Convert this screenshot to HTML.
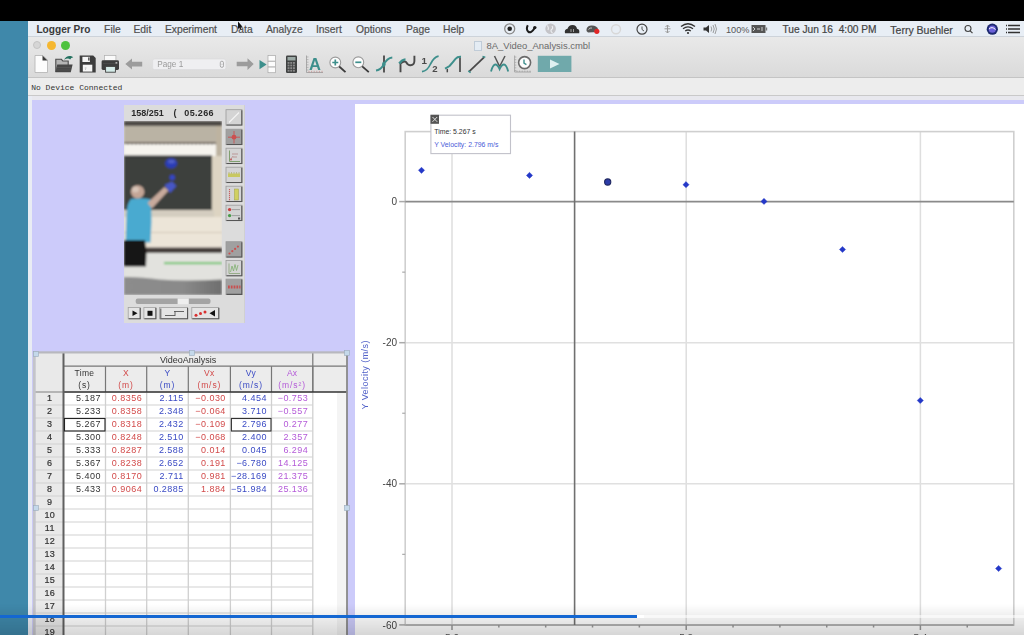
<!DOCTYPE html><html><head><meta charset="utf-8"><style>
*{margin:0;padding:0;box-sizing:border-box}
html,body{width:1024px;height:635px;overflow:hidden;background:#000;font-family:"Liberation Sans",sans-serif}
.a{position:absolute}
.t{position:absolute;white-space:nowrap;line-height:1}
svg{position:absolute;overflow:visible}
</style></head><body><div id="root" style="position:absolute;left:0;top:0;width:1024px;height:635px;overflow:hidden;filter:blur(0.35px)">
<div class="a" style="left:0;top:21px;width:28px;height:614px;background:#3f88aa"></div>
<div class="a" style="left:28px;top:21px;width:996px;height:614px;background:#e3e6ec"></div>
<div class="a" style="left:28px;top:37px;width:4.5px;height:598px;background:#e9ecf4"></div>
<div class="a" style="left:28px;top:21px;width:996px;height:16px;background:#e8eef5;border-bottom:1px solid #cdd3da"></div>
<div class="t" style="left:36.4px;top:24.81px;font-size:10.15px;color:#3a3a3a;font-weight:bold;">Logger Pro</div>
<div class="t" style="left:104.1px;top:24.68px;font-size:10.3px;color:#505050;-webkit-text-stroke:0.2px #505050;">File</div>
<div class="t" style="left:133.5px;top:24.68px;font-size:10.3px;color:#505050;-webkit-text-stroke:0.2px #505050;">Edit</div>
<div class="t" style="left:164.9px;top:24.68px;font-size:10.3px;color:#505050;-webkit-text-stroke:0.2px #505050;">Experiment</div>
<div class="t" style="left:230.9px;top:24.68px;font-size:10.3px;color:#505050;-webkit-text-stroke:0.2px #505050;">Data</div>
<div class="t" style="left:266px;top:24.68px;font-size:10.3px;color:#505050;-webkit-text-stroke:0.2px #505050;">Analyze</div>
<div class="t" style="left:316px;top:24.68px;font-size:10.3px;color:#505050;-webkit-text-stroke:0.2px #505050;">Insert</div>
<div class="t" style="left:356px;top:24.68px;font-size:10.3px;color:#505050;-webkit-text-stroke:0.2px #505050;">Options</div>
<div class="t" style="left:406px;top:24.68px;font-size:10.3px;color:#505050;-webkit-text-stroke:0.2px #505050;">Page</div>
<div class="t" style="left:443px;top:24.68px;font-size:10.3px;color:#505050;-webkit-text-stroke:0.2px #505050;">Help</div>
<div class="t" style="left:726px;top:25.51px;font-size:9.2px;color:#555;">100%</div>
<div class="t" style="left:782.4px;top:25.07px;font-size:10.2px;color:#444;-webkit-text-stroke:0.2px #444;">Tue Jun 16 &nbsp;4:00 PM</div>
<div class="t" style="left:890.3px;top:24.81px;font-size:10.5px;color:#444;-webkit-text-stroke:0.2px #444;">Terry Buehler</div>
<svg width="1024" height="635" style="left:0;top:0"><path d="M238 21.5 L238 29 L239.6 27.4 L240.8 30 L241.6 29.6 L240.5 27 L242.5 26.8Z" fill="#111"/></svg>
<div class="a" style="left:28px;top:37px;width:996px;height:41px;background:linear-gradient(#e9e9e9,#dadada);border-bottom:1px solid #c4c4c4"></div>
<div class="a" style="left:32.5px;top:40.5px;width:8.5px;height:8.5px;border-radius:50%;background:#d6d6d6;border:1px solid #c4c4c4"></div>
<div class="a" style="left:46.5px;top:40.5px;width:9px;height:9px;border-radius:50%;background:#f5b731"></div>
<div class="a" style="left:61px;top:40.5px;width:9px;height:9px;border-radius:50%;background:#4ec23e"></div>
<div class="t" style="left:486.5px;top:41.00px;font-size:9.45px;color:#6a6a6a;">8A_Video_Analysis.cmbl</div>
<div class="a" style="left:473.5px;top:40.5px;width:8px;height:10.5px;background:#e4ecf4;border:1px solid #c0ccd8"></div>
<div class="a" style="left:28px;top:78px;width:996px;height:18px;background:#ededed;border-bottom:1px solid #c9c9c9"></div>
<div class="t" style="left:31.2px;top:84.03px;font-size:8px;color:#333;font-family:'Liberation Mono',monospace;">No Device Connected</div>
<div class="a" style="left:32px;top:96px;width:992px;height:5px;background:#e8e8ee"></div>
<div class="a" style="left:32px;top:100px;width:992px;height:535px;background:#cccbfa"></div>
<div class="a" style="left:355px;top:104px;width:669px;height:531px;background:#fff"></div><svg width="1024" height="635" style="left:0;top:0" viewBox="0 0 1024 635"><line x1="452.0" y1="131.6" x2="452.0" y2="625.0" stroke="#dedede" stroke-width="1.5"/><line x1="686.2" y1="131.6" x2="686.2" y2="625.0" stroke="#dedede" stroke-width="1.5"/><line x1="920.4" y1="131.6" x2="920.4" y2="625.0" stroke="#dedede" stroke-width="1.5"/><line x1="405.2" y1="342.7" x2="1013.8" y2="342.7" stroke="#e0e0e0" stroke-width="1.5"/><line x1="405.2" y1="483.79999999999995" x2="1013.8" y2="483.79999999999995" stroke="#e0e0e0" stroke-width="1.5"/><rect x="405.2" y="131.6" width="608.5999999999999" height="493.4" fill="none" stroke="#cfcfcf" stroke-width="1.6"/><line x1="405.2" y1="201.6" x2="1013.8" y2="201.6" stroke="#8a8a8a" stroke-width="1.7"/><line x1="405.2" y1="625.0" x2="1013.8" y2="625.0" stroke="#b4b4b4" stroke-width="1.8"/><line x1="574.6" y1="131.6" x2="574.6" y2="625.0" stroke="#707070" stroke-width="1.6"/><line x1="399.2" y1="201.6" x2="405.2" y2="201.6" stroke="#aaa" stroke-width="1.5"/><line x1="399.2" y1="342.7" x2="405.2" y2="342.7" stroke="#aaa" stroke-width="1.5"/><line x1="399.2" y1="483.79999999999995" x2="405.2" y2="483.79999999999995" stroke="#aaa" stroke-width="1.5"/><line x1="399.2" y1="624.9" x2="405.2" y2="624.9" stroke="#aaa" stroke-width="1.5"/><line x1="402.2" y1="272.15" x2="405.2" y2="272.15" stroke="#aaa" stroke-width="1.2"/><line x1="402.2" y1="413.25" x2="405.2" y2="413.25" stroke="#aaa" stroke-width="1.2"/><line x1="402.2" y1="554.35" x2="405.2" y2="554.35" stroke="#aaa" stroke-width="1.2"/><line x1="452.0" y1="625.0" x2="452.0" y2="630.0" stroke="#999" stroke-width="1.5"/><line x1="498.839999999999" y1="625.0" x2="498.839999999999" y2="627.5" stroke="#999" stroke-width="1.5"/><line x1="545.6800000000001" y1="625.0" x2="545.6800000000001" y2="627.5" stroke="#999" stroke-width="1.5"/><line x1="592.5199999999991" y1="625.0" x2="592.5199999999991" y2="627.5" stroke="#999" stroke-width="1.5"/><line x1="639.3600000000001" y1="625.0" x2="639.3600000000001" y2="627.5" stroke="#999" stroke-width="1.5"/><line x1="686.1999999999991" y1="625.0" x2="686.1999999999991" y2="630.0" stroke="#999" stroke-width="1.5"/><line x1="733.0400000000002" y1="625.0" x2="733.0400000000002" y2="627.5" stroke="#999" stroke-width="1.5"/><line x1="779.8799999999992" y1="625.0" x2="779.8799999999992" y2="627.5" stroke="#999" stroke-width="1.5"/><line x1="826.7200000000003" y1="625.0" x2="826.7200000000003" y2="627.5" stroke="#999" stroke-width="1.5"/><line x1="873.5599999999993" y1="625.0" x2="873.5599999999993" y2="627.5" stroke="#999" stroke-width="1.5"/><line x1="920.4000000000004" y1="625.0" x2="920.4000000000004" y2="630.0" stroke="#999" stroke-width="1.5"/><line x1="967.2399999999994" y1="625.0" x2="967.2399999999994" y2="627.5" stroke="#999" stroke-width="1.5"/><text x="452.0" y="641.5" text-anchor="middle" font-size="10" fill="#555" font-family="Liberation Sans">5.2</text><text x="686.2" y="641.5" text-anchor="middle" font-size="10" fill="#555" font-family="Liberation Sans">5.3</text><text x="920.4" y="641.5" text-anchor="middle" font-size="10" fill="#555" font-family="Liberation Sans">5.4</text><text x="397" y="205.2" text-anchor="end" font-size="10" fill="#444" font-family="Liberation Sans">0</text><text x="397" y="346.3" text-anchor="end" font-size="10" fill="#444" font-family="Liberation Sans">-20</text><text x="397" y="487.4" text-anchor="end" font-size="10" fill="#444" font-family="Liberation Sans">-40</text><text x="397" y="628.5" text-anchor="end" font-size="10" fill="#444" font-family="Liberation Sans">-60</text><text transform="translate(368,374.8) rotate(-90)" text-anchor="middle" font-size="9" letter-spacing="0.45" fill="#5060c8" font-family="Liberation Sans">Y Velocity (m/s)</text><path d="M418.4 170.3 L421.5 167.20000000000002 L424.6 170.3 L421.5 173.4Z" fill="#2438c8" stroke="#2438c8" stroke-width="0.4" stroke-linejoin="round"/><path d="M526.4 175.4 L529.5 172.3 L532.6 175.4 L529.5 178.5Z" fill="#2438c8" stroke="#2438c8" stroke-width="0.4" stroke-linejoin="round"/><path d="M682.9 184.7 L686.0 181.6 L689.1 184.7 L686.0 187.79999999999998Z" fill="#2438c8" stroke="#2438c8" stroke-width="0.4" stroke-linejoin="round"/><path d="M760.9 201.4 L764.0 198.3 L767.1 201.4 L764.0 204.5Z" fill="#2438c8" stroke="#2438c8" stroke-width="0.4" stroke-linejoin="round"/><path d="M839.4 249.5 L842.5 246.4 L845.6 249.5 L842.5 252.6Z" fill="#2438c8" stroke="#2438c8" stroke-width="0.4" stroke-linejoin="round"/><path d="M917.1999999999999 400.5 L920.3 397.4 L923.4 400.5 L920.3 403.6Z" fill="#2438c8" stroke="#2438c8" stroke-width="0.4" stroke-linejoin="round"/><path d="M995.5 568.5 L998.6 565.4 L1001.7 568.5 L998.6 571.6Z" fill="#2438c8" stroke="#2438c8" stroke-width="0.4" stroke-linejoin="round"/><circle cx="607.7" cy="182" r="3.1" fill="#2c3ca8" stroke="#1e2660" stroke-width="1.1"/><rect x="430.9" y="115.2" width="79.6" height="38.4" fill="#fff" stroke="#c2c2ca" stroke-width="1.1"/><rect x="430.5" y="114.8" width="8.5" height="9" fill="#555"/><path d="M432.5 117 L437.2 121.8 M437.2 117 L432.5 121.8" stroke="#e0e0e0" stroke-width="1"/><text x="434.2" y="133.8" font-size="6.9" fill="#333" font-family="Liberation Sans">Time: 5.267 s</text><text x="434.2" y="147.4" font-size="6.9" fill="#4a5ad8" font-family="Liberation Sans">Y Velocity: 2.796 m/s</text></svg>
<div class="a" style="left:124px;top:105px;width:121px;height:218px;background:#dcdcdc;border-right:1px solid #d0d0d0"></div><div class="t" style="left:131.2px;top:108.7px;font-size:9px;font-weight:bold;color:#2a2a2a">158/251</div><div class="t" style="left:173.6px;top:108.7px;font-size:9px;font-weight:bold;color:#2a2a2a">(</div><div class="t" style="left:184.3px;top:108.7px;font-size:9px;font-weight:bold;color:#2a2a2a;letter-spacing:0.35px">05.266</div><svg width="1024" height="635" style="left:0;top:0" viewBox="0 0 1024 635"><defs><filter id="bl" x="-5%" y="-5%" width="110%" height="110%"><feGaussianBlur stdDeviation="0.9"/></filter><linearGradient id="gb" x1="0" y1="0" x2="1" y2="0"><stop offset="0" stop-color="#8c8c8c"/><stop offset="0.6" stop-color="#8a8a8a"/><stop offset="1" stop-color="#6e6e6e"/></linearGradient><clipPath id="vc"><rect x="124" y="121" width="98" height="174"/></clipPath></defs><g clip-path="url(#vc)" filter="url(#bl)"><rect x="124" y="121" width="98" height="174" fill="#e6dfd2"/><rect x="124" y="121" width="98" height="5" fill="#4e4a44"/><rect x="124" y="126" width="98" height="17" fill="#bab3a4"/><rect x="124" y="142" width="92" height="2" fill="#7a7066"/><rect x="124" y="144" width="92" height="12" fill="#f6f4ee"/><path d="M124 144 q2 -1.5 4 0 q2 -1.5 4 0 q2 -1.5 4 0 q2 -1.5 4 0 q2 -1.5 4 0 q2 -1.5 4 0 q2 -1.5 4 0 q2 -1.5 4 0 q2 -1.5 4 0 q2 -1.5 4 0 q2 -1.5 4 0 q2 -1.5 4 0 q2 -1.5 4 0 q2 -1.5 4 0 q2 -1.5 4 0 q2 -1.5 4 0 q2 -1.5 4 0 q2 -1.5 4 0 q2 -1.5 4 0 q2 -1.5 4 0 q2 -1.5 4 0 q2 -1.5 4 0 q2 -1.5 4 0" fill="none" stroke="#6a6258" stroke-width="1.2"/><rect x="216" y="126" width="6" height="30" fill="#bdb3a0"/><rect x="212" y="156" width="10" height="61" fill="#ddd4c2"/><rect x="124" y="156" width="88" height="55" fill="#3c403e"/><rect x="124" y="155.5" width="88" height="1.5" fill="#2a2a2a"/><rect x="124" y="210" width="90" height="7" fill="#d4cdc0"/><rect x="124" y="217" width="98" height="31" fill="#ece5d8"/><rect x="124" y="232" width="98" height="1" fill="#d0c6b2"/><rect x="124" y="247.5" width="98" height="5.8" fill="#453c3a"/><rect x="124" y="253" width="98" height="30" fill="#e2e2de"/><rect x="164" y="262" width="58" height="2.2" fill="#74c672"/><path d="M124 277 Q140 276.5 160 279.5 Q185 281.5 222 279.5 L222 295 L124 295Z" fill="url(#gb)"/><path d="M131 199 Q141 197.5 151 199.5 L151.5 222 L150.5 242.5 L125.5 242.5 L126.5 214 Q127 203 131 199Z" fill="#48aad0"/><path d="M147.5 203 L164.5 187 L168.5 190.5 L152 208.5Z" fill="#c8aa9c"/><ellipse cx="137.6" cy="191.8" rx="6.8" ry="6.6" fill="#c4a596"/><ellipse cx="135.5" cy="189.5" rx="3.5" ry="3" fill="#d8c4b8"/><path d="M124 240 L145 240 L146.5 252 L146 266.5 L124 266.5Z" fill="#161616"/><path d="M164.5 185 L172 181.5 L176.5 186 L170 193Z" fill="#4656c6"/><ellipse cx="171.1" cy="163.3" rx="5.9" ry="5.1" fill="#2c3cb8"/><ellipse cx="171.5" cy="161.5" rx="3.5" ry="1.8" fill="#5262c8"/><circle cx="172.2" cy="177.5" r="2.7" fill="#3444c4"/></g><rect x="135.7" y="298.6" width="74.8" height="5.5" rx="2" fill="#a4a4a4"/><rect x="177.6" y="298.4" width="11.2" height="5.8" fill="#eeeeee"/><rect x="128.2" y="307.5" width="12" height="11.3" fill="#e4e4e4" stroke="#a0a0a0" stroke-width="0.8"/><path d="M128.7 318.8 L140.2 318.8 L140.2 308.0" stroke="#555" stroke-width="1.1" fill="none"/><path d="M132.5 310.5 L137.5 313.2 L132.5 316Z" fill="#111"/><rect x="143.9" y="307.5" width="12" height="11.3" fill="#e4e4e4" stroke="#a0a0a0" stroke-width="0.8"/><path d="M144.4 318.8 L155.9 318.8 L155.9 308.0" stroke="#555" stroke-width="1.1" fill="none"/><rect x="147.5" y="310.8" width="5" height="5" fill="#111"/><rect x="159.6" y="307.5" width="28" height="11.3" fill="#e4e4e4" stroke="#a0a0a0" stroke-width="0.8"/><path d="M160.1 318.8 L187.6 318.8 L187.6 308.0" stroke="#555" stroke-width="1.1" fill="none"/><path d="M160.8 308.5 L160.8 318" stroke="#555" stroke-width="1"/><path d="M165 315.5 L175 315.5 M175 311 L175 316 M174 311.5 L184 311.5" stroke="#555" stroke-width="0.9" fill="none"/><rect x="191.8" y="307.5" width="27" height="11.3" fill="#e4e4e4" stroke="#a0a0a0" stroke-width="0.8"/><path d="M192.3 318.8 L218.8 318.8 L218.8 308.0" stroke="#555" stroke-width="1.1" fill="none"/><circle cx="196" cy="315.3" r="1.5" fill="#d83030"/><circle cx="200.5" cy="313.5" r="1.5" fill="#d83030"/><circle cx="205" cy="312" r="1.5" fill="#d83030"/><path d="M209.5 313.2 L215 310 L215 316.4Z" fill="#111"/><rect x="226" y="109.7" width="16" height="15.5" fill="#d4d4d4" stroke="#9a9a9a" stroke-width="0.8"/><path d="M226.5 125.0 L241.8 125.0 L241.8 110.2" stroke="#555" stroke-width="1.1" fill="none"/><rect x="226" y="129.2" width="16" height="15.5" fill="#a0a0a0" stroke="#9a9a9a" stroke-width="0.8"/><path d="M226.5 144.5 L241.8 144.5 L241.8 129.7" stroke="#555" stroke-width="1.1" fill="none"/><rect x="226" y="148.2" width="16" height="15.5" fill="#d4d4d4" stroke="#9a9a9a" stroke-width="0.8"/><path d="M226.5 163.5 L241.8 163.5 L241.8 148.7" stroke="#555" stroke-width="1.1" fill="none"/><rect x="226" y="167.2" width="16" height="15.5" fill="#d4d4d4" stroke="#9a9a9a" stroke-width="0.8"/><path d="M226.5 182.5 L241.8 182.5 L241.8 167.7" stroke="#555" stroke-width="1.1" fill="none"/><rect x="226" y="186.2" width="16" height="15.5" fill="#d4d4d4" stroke="#9a9a9a" stroke-width="0.8"/><path d="M226.5 201.5 L241.8 201.5 L241.8 186.7" stroke="#555" stroke-width="1.1" fill="none"/><rect x="226" y="205.2" width="16" height="15.5" fill="#d4d4d4" stroke="#9a9a9a" stroke-width="0.8"/><path d="M226.5 220.5 L241.8 220.5 L241.8 205.7" stroke="#555" stroke-width="1.1" fill="none"/><rect x="226" y="241.7" width="16" height="15.5" fill="#a0a0a0" stroke="#9a9a9a" stroke-width="0.8"/><path d="M226.5 257.0 L241.8 257.0 L241.8 242.2" stroke="#555" stroke-width="1.1" fill="none"/><rect x="226" y="260.4" width="16" height="15.5" fill="#d4d4d4" stroke="#9a9a9a" stroke-width="0.8"/><path d="M226.5 275.7 L241.8 275.7 L241.8 260.9" stroke="#555" stroke-width="1.1" fill="none"/><rect x="226" y="279.1" width="16" height="15.5" fill="#a0a0a0" stroke="#9a9a9a" stroke-width="0.8"/><path d="M226.5 294.40000000000003 L241.8 294.40000000000003 L241.8 279.6" stroke="#555" stroke-width="1.1" fill="none"/><path d="M229 122.5 L239 112.5" stroke="#f4f4f4" stroke-width="1.1"/><path d="M234 131 L234 143.5 M228 137.2 L240 137.2" stroke="#c85858" stroke-width="1"/><circle cx="234" cy="137.2" r="2.4" fill="#cc5050"/><path d="M229.5 150.5 L229.5 161.5 L240 161.5" stroke="#80a070" stroke-width="1" fill="none"/><path d="M231 159 L233 156 M233 157 L237 157 M232 154 L238 154" stroke="#b08080" stroke-width="0.7"/><circle cx="231" cy="159.5" r="0.9" fill="#c05050"/><rect x="228" y="173.5" width="12" height="3.5" fill="#c8c860"/><path d="M229 173.5 L229 172.3 M231.5 173.5 L231.5 172.3 M234 173.5 L234 172.3 M236.5 173.5 L236.5 172.3 M239 173.5 L239 172.3" stroke="#a0a040" stroke-width="0.7"/><path d="M229.5 189 L229.5 200.5" stroke="#c86060" stroke-width="1.1" stroke-dasharray="1.2 0.8"/><rect x="234.5" y="189" width="4" height="11" fill="#d0d060" stroke="#a0a040" stroke-width="0.5"/><circle cx="229.6" cy="209.6" r="1.7" fill="#c84040"/><circle cx="229.6" cy="215.6" r="1.7" fill="#4a9a4a"/><path d="M232 209.6 L240 209.6 M232 215.6 L240 215.6" stroke="#888" stroke-width="0.7"/><rect x="238" y="217.5" width="2.2" height="2" fill="#555"/><circle cx="229.5" cy="253.5" r="1.1" fill="#c85050"/><circle cx="232.3" cy="251.2" r="1.1" fill="#c85050"/><circle cx="235.1" cy="248.9" r="1.1" fill="#c85050"/><circle cx="237.9" cy="246.6" r="1.1" fill="#c85050"/><path d="M229 263.5 L229 273.5 L240 273.5" stroke="#90a880" stroke-width="0.9" fill="none"/><path d="M230.5 272 L232 266 L233.5 271 L235 264.5 L236.5 270.5 L238 265" stroke="#80b070" stroke-width="0.8" fill="none"/><path d="M228 287 L240.5 287" stroke="#c85050" stroke-width="3.2" stroke-dasharray="1.8 1"/></svg>
<svg width="1024" height="635" style="left:0;top:0" viewBox="0 0 1024 635"><rect x="35.0" y="352.5" width="312.0" height="282.5" fill="#ececec"/><rect x="63.5" y="392.0" width="273.5" height="243.0" fill="#fff"/><rect x="337" y="392.0" width="10.0" height="243.0" fill="#f4f4f4"/><rect x="35.0" y="352.5" width="28.5" height="282.5" fill="#e9e9e9"/><rect x="63.5" y="352.5" width="283.5" height="39.5" fill="#ececec"/><line x1="35.0" y1="392.0" x2="312.8" y2="392.0" stroke="#d2d2d2" stroke-width="1.1"/><line x1="35.0" y1="405.0" x2="312.8" y2="405.0" stroke="#d2d2d2" stroke-width="1.1"/><line x1="35.0" y1="418.0" x2="312.8" y2="418.0" stroke="#d2d2d2" stroke-width="1.1"/><line x1="35.0" y1="431.0" x2="312.8" y2="431.0" stroke="#d2d2d2" stroke-width="1.1"/><line x1="35.0" y1="444.0" x2="312.8" y2="444.0" stroke="#d2d2d2" stroke-width="1.1"/><line x1="35.0" y1="457.0" x2="312.8" y2="457.0" stroke="#d2d2d2" stroke-width="1.1"/><line x1="35.0" y1="470.0" x2="312.8" y2="470.0" stroke="#d2d2d2" stroke-width="1.1"/><line x1="35.0" y1="483.0" x2="312.8" y2="483.0" stroke="#d2d2d2" stroke-width="1.1"/><line x1="35.0" y1="496.0" x2="312.8" y2="496.0" stroke="#d2d2d2" stroke-width="1.1"/><line x1="35.0" y1="509.0" x2="312.8" y2="509.0" stroke="#d2d2d2" stroke-width="1.1"/><line x1="35.0" y1="522.0" x2="312.8" y2="522.0" stroke="#d2d2d2" stroke-width="1.1"/><line x1="35.0" y1="535.0" x2="312.8" y2="535.0" stroke="#d2d2d2" stroke-width="1.1"/><line x1="35.0" y1="548.0" x2="312.8" y2="548.0" stroke="#d2d2d2" stroke-width="1.1"/><line x1="35.0" y1="561.0" x2="312.8" y2="561.0" stroke="#d2d2d2" stroke-width="1.1"/><line x1="35.0" y1="574.0" x2="312.8" y2="574.0" stroke="#d2d2d2" stroke-width="1.1"/><line x1="35.0" y1="587.0" x2="312.8" y2="587.0" stroke="#d2d2d2" stroke-width="1.1"/><line x1="35.0" y1="600.0" x2="312.8" y2="600.0" stroke="#d2d2d2" stroke-width="1.1"/><line x1="35.0" y1="613.0" x2="312.8" y2="613.0" stroke="#d2d2d2" stroke-width="1.1"/><line x1="35.0" y1="626.0" x2="312.8" y2="626.0" stroke="#d2d2d2" stroke-width="1.1"/><line x1="35.0" y1="639.0" x2="312.8" y2="639.0" stroke="#d2d2d2" stroke-width="1.1"/><line x1="105.5" y1="392.0" x2="105.5" y2="635" stroke="#d0d0d0" stroke-width="1.3"/><line x1="146.7" y1="392.0" x2="146.7" y2="635" stroke="#d0d0d0" stroke-width="1.3"/><line x1="188.3" y1="392.0" x2="188.3" y2="635" stroke="#d0d0d0" stroke-width="1.3"/><line x1="230.4" y1="392.0" x2="230.4" y2="635" stroke="#d0d0d0" stroke-width="1.3"/><line x1="271.5" y1="392.0" x2="271.5" y2="635" stroke="#d0d0d0" stroke-width="1.3"/><line x1="312.8" y1="392.0" x2="312.8" y2="635" stroke="#d0d0d0" stroke-width="1.3"/><line x1="63.5" y1="366.2" x2="347.0" y2="366.2" stroke="#777" stroke-width="1.2"/><line x1="105.5" y1="366.2" x2="105.5" y2="392.0" stroke="#777" stroke-width="1.2"/><line x1="146.7" y1="366.2" x2="146.7" y2="392.0" stroke="#777" stroke-width="1.2"/><line x1="188.3" y1="366.2" x2="188.3" y2="392.0" stroke="#777" stroke-width="1.2"/><line x1="230.4" y1="366.2" x2="230.4" y2="392.0" stroke="#777" stroke-width="1.2"/><line x1="271.5" y1="366.2" x2="271.5" y2="392.0" stroke="#777" stroke-width="1.2"/><line x1="312.8" y1="366.2" x2="312.8" y2="392.0" stroke="#777" stroke-width="1.2"/><line x1="312.8" y1="352.5" x2="312.8" y2="392.0" stroke="#777" stroke-width="1.2"/><line x1="63.5" y1="392.0" x2="347.0" y2="392.0" stroke="#333" stroke-width="1.6"/><line x1="35.0" y1="392.0" x2="63.5" y2="392.0" stroke="#999" stroke-width="1.2"/><line x1="63.5" y1="352.5" x2="63.5" y2="635" stroke="#606060" stroke-width="2"/><rect x="32.9" y="351.3" width="314.1" height="2.2" fill="#b8b8be"/><line x1="347.0" y1="352.5" x2="347.0" y2="635" stroke="#8a8a8a" stroke-width="1.8"/><rect x="32.9" y="352.5" width="2.8" height="282.5" fill="#c4c4ca"/><text x="188.15" y="363.0" text-anchor="middle" font-size="9" fill="#333" font-family="Liberation Sans">VideoAnalysis</text><text x="84.5" y="375.7" text-anchor="middle" font-size="8.5" fill="#333" font-family="Liberation Sans" letter-spacing="0.3">Time</text><text x="84.5" y="388.2" text-anchor="middle" font-size="8.5" fill="#333" font-family="Liberation Sans" letter-spacing="0.9">(s)</text><text x="126.1" y="375.7" text-anchor="middle" font-size="8.5" fill="#d24a4a" font-family="Liberation Sans" letter-spacing="0.3">X</text><text x="126.1" y="388.2" text-anchor="middle" font-size="8.5" fill="#d24a4a" font-family="Liberation Sans" letter-spacing="0.9">(m)</text><text x="167.5" y="375.7" text-anchor="middle" font-size="8.5" fill="#3a4ac4" font-family="Liberation Sans" letter-spacing="0.3">Y</text><text x="167.5" y="388.2" text-anchor="middle" font-size="8.5" fill="#3a4ac4" font-family="Liberation Sans" letter-spacing="0.9">(m)</text><text x="209.35000000000002" y="375.7" text-anchor="middle" font-size="8.5" fill="#d24a4a" font-family="Liberation Sans" letter-spacing="0.3">Vx</text><text x="209.35000000000002" y="388.2" text-anchor="middle" font-size="8.5" fill="#d24a4a" font-family="Liberation Sans" letter-spacing="0.9">(m/s)</text><text x="250.95" y="375.7" text-anchor="middle" font-size="8.5" fill="#3a4ac4" font-family="Liberation Sans" letter-spacing="0.3">Vy</text><text x="250.95" y="388.2" text-anchor="middle" font-size="8.5" fill="#3a4ac4" font-family="Liberation Sans" letter-spacing="0.9">(m/s)</text><text x="292.15" y="375.7" text-anchor="middle" font-size="8.5" fill="#b45ad8" font-family="Liberation Sans" letter-spacing="0.3">Ax</text><text x="292.15" y="388.2" text-anchor="middle" font-size="8.5" fill="#b45ad8" font-family="Liberation Sans" letter-spacing="0.9">(m/s²)</text><text x="49.75" y="401.4" text-anchor="middle" font-size="9" fill="#333" stroke="#333" stroke-width="0.2" font-family="Liberation Sans" letter-spacing="0.3">1</text><text x="49.75" y="414.4" text-anchor="middle" font-size="9" fill="#333" stroke="#333" stroke-width="0.2" font-family="Liberation Sans" letter-spacing="0.3">2</text><text x="49.75" y="427.4" text-anchor="middle" font-size="9" fill="#333" stroke="#333" stroke-width="0.2" font-family="Liberation Sans" letter-spacing="0.3">3</text><text x="49.75" y="440.4" text-anchor="middle" font-size="9" fill="#333" stroke="#333" stroke-width="0.2" font-family="Liberation Sans" letter-spacing="0.3">4</text><text x="49.75" y="453.4" text-anchor="middle" font-size="9" fill="#333" stroke="#333" stroke-width="0.2" font-family="Liberation Sans" letter-spacing="0.3">5</text><text x="49.75" y="466.4" text-anchor="middle" font-size="9" fill="#333" stroke="#333" stroke-width="0.2" font-family="Liberation Sans" letter-spacing="0.3">6</text><text x="49.75" y="479.4" text-anchor="middle" font-size="9" fill="#333" stroke="#333" stroke-width="0.2" font-family="Liberation Sans" letter-spacing="0.3">7</text><text x="49.75" y="492.4" text-anchor="middle" font-size="9" fill="#333" stroke="#333" stroke-width="0.2" font-family="Liberation Sans" letter-spacing="0.3">8</text><text x="49.75" y="505.4" text-anchor="middle" font-size="9" fill="#333" stroke="#333" stroke-width="0.2" font-family="Liberation Sans" letter-spacing="0.3">9</text><text x="49.75" y="518.4" text-anchor="middle" font-size="9" fill="#333" stroke="#333" stroke-width="0.2" font-family="Liberation Sans" letter-spacing="0.3">10</text><text x="49.75" y="531.4" text-anchor="middle" font-size="9" fill="#333" stroke="#333" stroke-width="0.2" font-family="Liberation Sans" letter-spacing="0.3">11</text><text x="49.75" y="544.4" text-anchor="middle" font-size="9" fill="#333" stroke="#333" stroke-width="0.2" font-family="Liberation Sans" letter-spacing="0.3">12</text><text x="49.75" y="557.4" text-anchor="middle" font-size="9" fill="#333" stroke="#333" stroke-width="0.2" font-family="Liberation Sans" letter-spacing="0.3">13</text><text x="49.75" y="570.4" text-anchor="middle" font-size="9" fill="#333" stroke="#333" stroke-width="0.2" font-family="Liberation Sans" letter-spacing="0.3">14</text><text x="49.75" y="583.4" text-anchor="middle" font-size="9" fill="#333" stroke="#333" stroke-width="0.2" font-family="Liberation Sans" letter-spacing="0.3">15</text><text x="49.75" y="596.4" text-anchor="middle" font-size="9" fill="#333" stroke="#333" stroke-width="0.2" font-family="Liberation Sans" letter-spacing="0.3">16</text><text x="49.75" y="609.4" text-anchor="middle" font-size="9" fill="#333" stroke="#333" stroke-width="0.2" font-family="Liberation Sans" letter-spacing="0.3">17</text><text x="49.75" y="622.4" text-anchor="middle" font-size="9" fill="#333" stroke="#333" stroke-width="0.2" font-family="Liberation Sans" letter-spacing="0.3">18</text><text x="49.75" y="635.4" text-anchor="middle" font-size="9" fill="#333" stroke="#333" stroke-width="0.2" font-family="Liberation Sans" letter-spacing="0.3">19</text><text x="100.9" y="400.9" text-anchor="end" font-size="9" fill="#333" font-family="Liberation Sans" letter-spacing="0.45">5.187</text><text x="142.1" y="400.9" text-anchor="end" font-size="9" fill="#d24a4a" font-family="Liberation Sans" letter-spacing="0.45">0.8356</text><text x="183.70000000000002" y="400.9" text-anchor="end" font-size="9" fill="#3a4ac4" font-family="Liberation Sans" letter-spacing="0.45">2.115</text><text x="225.8" y="400.9" text-anchor="end" font-size="9" fill="#d24a4a" font-family="Liberation Sans" letter-spacing="0.45">−0.030</text><text x="266.9" y="400.9" text-anchor="end" font-size="9" fill="#3a4ac4" font-family="Liberation Sans" letter-spacing="0.45">4.454</text><text x="308.2" y="400.9" text-anchor="end" font-size="9" fill="#b45ad8" font-family="Liberation Sans" letter-spacing="0.45">−0.753</text><text x="100.9" y="413.9" text-anchor="end" font-size="9" fill="#333" font-family="Liberation Sans" letter-spacing="0.45">5.233</text><text x="142.1" y="413.9" text-anchor="end" font-size="9" fill="#d24a4a" font-family="Liberation Sans" letter-spacing="0.45">0.8358</text><text x="183.70000000000002" y="413.9" text-anchor="end" font-size="9" fill="#3a4ac4" font-family="Liberation Sans" letter-spacing="0.45">2.348</text><text x="225.8" y="413.9" text-anchor="end" font-size="9" fill="#d24a4a" font-family="Liberation Sans" letter-spacing="0.45">−0.064</text><text x="266.9" y="413.9" text-anchor="end" font-size="9" fill="#3a4ac4" font-family="Liberation Sans" letter-spacing="0.45">3.710</text><text x="308.2" y="413.9" text-anchor="end" font-size="9" fill="#b45ad8" font-family="Liberation Sans" letter-spacing="0.45">−0.557</text><text x="100.9" y="426.9" text-anchor="end" font-size="9" fill="#333" font-family="Liberation Sans" letter-spacing="0.45">5.267</text><text x="142.1" y="426.9" text-anchor="end" font-size="9" fill="#d24a4a" font-family="Liberation Sans" letter-spacing="0.45">0.8318</text><text x="183.70000000000002" y="426.9" text-anchor="end" font-size="9" fill="#3a4ac4" font-family="Liberation Sans" letter-spacing="0.45">2.432</text><text x="225.8" y="426.9" text-anchor="end" font-size="9" fill="#d24a4a" font-family="Liberation Sans" letter-spacing="0.45">−0.109</text><text x="266.9" y="426.9" text-anchor="end" font-size="9" fill="#3a4ac4" font-family="Liberation Sans" letter-spacing="0.45">2.796</text><text x="308.2" y="426.9" text-anchor="end" font-size="9" fill="#b45ad8" font-family="Liberation Sans" letter-spacing="0.45">0.277</text><text x="100.9" y="439.9" text-anchor="end" font-size="9" fill="#333" font-family="Liberation Sans" letter-spacing="0.45">5.300</text><text x="142.1" y="439.9" text-anchor="end" font-size="9" fill="#d24a4a" font-family="Liberation Sans" letter-spacing="0.45">0.8248</text><text x="183.70000000000002" y="439.9" text-anchor="end" font-size="9" fill="#3a4ac4" font-family="Liberation Sans" letter-spacing="0.45">2.510</text><text x="225.8" y="439.9" text-anchor="end" font-size="9" fill="#d24a4a" font-family="Liberation Sans" letter-spacing="0.45">−0.068</text><text x="266.9" y="439.9" text-anchor="end" font-size="9" fill="#3a4ac4" font-family="Liberation Sans" letter-spacing="0.45">2.400</text><text x="308.2" y="439.9" text-anchor="end" font-size="9" fill="#b45ad8" font-family="Liberation Sans" letter-spacing="0.45">2.357</text><text x="100.9" y="452.9" text-anchor="end" font-size="9" fill="#333" font-family="Liberation Sans" letter-spacing="0.45">5.333</text><text x="142.1" y="452.9" text-anchor="end" font-size="9" fill="#d24a4a" font-family="Liberation Sans" letter-spacing="0.45">0.8287</text><text x="183.70000000000002" y="452.9" text-anchor="end" font-size="9" fill="#3a4ac4" font-family="Liberation Sans" letter-spacing="0.45">2.588</text><text x="225.8" y="452.9" text-anchor="end" font-size="9" fill="#d24a4a" font-family="Liberation Sans" letter-spacing="0.45">0.014</text><text x="266.9" y="452.9" text-anchor="end" font-size="9" fill="#3a4ac4" font-family="Liberation Sans" letter-spacing="0.45">0.045</text><text x="308.2" y="452.9" text-anchor="end" font-size="9" fill="#b45ad8" font-family="Liberation Sans" letter-spacing="0.45">6.294</text><text x="100.9" y="465.9" text-anchor="end" font-size="9" fill="#333" font-family="Liberation Sans" letter-spacing="0.45">5.367</text><text x="142.1" y="465.9" text-anchor="end" font-size="9" fill="#d24a4a" font-family="Liberation Sans" letter-spacing="0.45">0.8238</text><text x="183.70000000000002" y="465.9" text-anchor="end" font-size="9" fill="#3a4ac4" font-family="Liberation Sans" letter-spacing="0.45">2.652</text><text x="225.8" y="465.9" text-anchor="end" font-size="9" fill="#d24a4a" font-family="Liberation Sans" letter-spacing="0.45">0.191</text><text x="266.9" y="465.9" text-anchor="end" font-size="9" fill="#3a4ac4" font-family="Liberation Sans" letter-spacing="0.45">−6.780</text><text x="308.2" y="465.9" text-anchor="end" font-size="9" fill="#b45ad8" font-family="Liberation Sans" letter-spacing="0.45">14.125</text><text x="100.9" y="478.9" text-anchor="end" font-size="9" fill="#333" font-family="Liberation Sans" letter-spacing="0.45">5.400</text><text x="142.1" y="478.9" text-anchor="end" font-size="9" fill="#d24a4a" font-family="Liberation Sans" letter-spacing="0.45">0.8170</text><text x="183.70000000000002" y="478.9" text-anchor="end" font-size="9" fill="#3a4ac4" font-family="Liberation Sans" letter-spacing="0.45">2.711</text><text x="225.8" y="478.9" text-anchor="end" font-size="9" fill="#d24a4a" font-family="Liberation Sans" letter-spacing="0.45">0.981</text><text x="266.9" y="478.9" text-anchor="end" font-size="9" fill="#3a4ac4" font-family="Liberation Sans" letter-spacing="0.45">−28.169</text><text x="308.2" y="478.9" text-anchor="end" font-size="9" fill="#b45ad8" font-family="Liberation Sans" letter-spacing="0.45">21.375</text><text x="100.9" y="491.9" text-anchor="end" font-size="9" fill="#333" font-family="Liberation Sans" letter-spacing="0.45">5.433</text><text x="142.1" y="491.9" text-anchor="end" font-size="9" fill="#d24a4a" font-family="Liberation Sans" letter-spacing="0.45">0.9064</text><text x="183.70000000000002" y="491.9" text-anchor="end" font-size="9" fill="#3a4ac4" font-family="Liberation Sans" letter-spacing="0.45">0.2885</text><text x="225.8" y="491.9" text-anchor="end" font-size="9" fill="#d24a4a" font-family="Liberation Sans" letter-spacing="0.45">1.884</text><text x="266.9" y="491.9" text-anchor="end" font-size="9" fill="#3a4ac4" font-family="Liberation Sans" letter-spacing="0.45">−51.984</text><text x="308.2" y="491.9" text-anchor="end" font-size="9" fill="#b45ad8" font-family="Liberation Sans" letter-spacing="0.45">25.136</text><rect x="64.5" y="418.5" width="40.5" height="12.5" fill="none" stroke="#222" stroke-width="1.1"/><rect x="231.4" y="418.5" width="39.599999999999994" height="12.5" fill="none" stroke="#333" stroke-width="1.1"/><rect x="33.5" y="351.5" width="5" height="5" fill="#c4d8ea" stroke="#9ab" stroke-width="0.6"/><rect x="189.5" y="350.5" width="5" height="5" fill="#c4d8ea" stroke="#9ab" stroke-width="0.6"/><rect x="344.5" y="350.5" width="5" height="5" fill="#c4d8ea" stroke="#9ab" stroke-width="0.6"/><rect x="33.5" y="505.5" width="5" height="5" fill="#c4d8ea" stroke="#9ab" stroke-width="0.6"/><rect x="344.5" y="505.5" width="5" height="5" fill="#c4d8ea" stroke="#9ab" stroke-width="0.6"/></svg>
<svg width="1024" height="635" style="left:0;top:0" viewBox="0 0 1024 635"><defs><filter id="ib" x="-10%" y="-10%" width="120%" height="120%"><feGaussianBlur stdDeviation="0.35"/></filter></defs><g filter="url(#ib)"><path d="M35 55.5 L43 55.5 L47.5 60 L47.5 72.5 L35 72.5Z" fill="#fcfcfc" stroke="#b8b8b8" stroke-width="0.9"/><path d="M42.5 55.5 L47.5 60.5 L42.5 60.5Z" fill="#3a3a3a"/><path d="M55.8 72 L55.8 59.3 L61.5 59.3 L62.8 61 L68.2 61 L68.2 65" fill="#b4b4b4" stroke="#4a4a4a" stroke-width="1.1"/><path d="M55.4 72.3 L57.2 64.6 L72.6 64.6 L70.8 72.3Z" fill="#474747"/><path d="M56.5 67.5 L71.5 67.5 M56 70 L71 70" stroke="#5a5a5a" stroke-width="0.6"/><path d="M64 59.8 Q66 55.6 70.5 56 Q72.5 56.3 73.2 57.5 Q71 57.3 70.2 59.5 Q68 57.2 64 59.8Z" fill="#22705e"/><path d="M79.7 55.5 L93.2 55.5 L95.7 58 L95.7 72.6 L79.7 72.6Z" fill="#3c3c3c"/><rect x="82.4" y="56.8" width="7.5" height="5.2" fill="#f6f6f6"/><rect x="88.2" y="57.4" width="1.3" height="3.2" fill="#3c3c3c"/><rect x="82.8" y="64.7" width="9.5" height="6.9" fill="#f6f6f6"/><path d="M84.8 68 L86.5 68 M85 69.3 L86 69.3" stroke="#999" stroke-width="0.6"/><rect x="104.6" y="55.6" width="11.3" height="5" fill="#fafafa" stroke="#b0b0b0" stroke-width="0.7"/><rect x="101.6" y="60.3" width="17.4" height="9.6" rx="1.4" fill="#3e3e3e"/><path d="M103 63.5 L117.5 63.5" stroke="#555" stroke-width="0.5"/><rect x="105.6" y="66.4" width="9.8" height="5.8" fill="#d4ebe8" stroke="#3e3e3e" stroke-width="0.9"/><rect x="115.5" y="62.2" width="1.8" height="1.3" fill="#cfcfcf"/><path d="M125.3 64.1 L132 58.6 L132 61.8 L142.2 61.8 L142.2 66.4 L132 66.4 L132 69.6Z" fill="#9c9c9c"/><rect x="152.6" y="59" width="73.3" height="10.6" rx="2" fill="#efeff1" stroke="#d8d8da" stroke-width="0.6"/><text x="157.3" y="67" font-size="8.2" fill="#9a9a9a" font-family="Liberation Sans">Page 1</text><rect x="220.3" y="61.2" width="3.2" height="6.2" rx="1.6" fill="none" stroke="#9a9a9a" stroke-width="0.8"/><path d="M220.3 64.3 L223.5 64.3" stroke="#bbb" stroke-width="0.5"/><path d="M253.7 64 L247.5 58.2 L247.5 61.8 L236.7 61.8 L236.7 66.3 L247.5 66.3 L247.5 70Z" fill="#9c9c9c"/><path d="M259.5 60 L266.6 64.6 L259.5 69.3Z" fill="#3e8f8c"/><rect x="268" y="55.5" width="7.5" height="5.6" fill="#fcfcfc" stroke="#a8a8a8" stroke-width="0.7"/><rect x="268" y="61.3" width="7.5" height="5.6" fill="#fcfcfc" stroke="#a8a8a8" stroke-width="0.7"/><rect x="268" y="67.1" width="7.5" height="5.6" fill="#fcfcfc" stroke="#a8a8a8" stroke-width="0.7"/><rect x="286" y="55.5" width="11" height="17.4" rx="1.2" fill="#404242"/><rect x="287.5" y="57" width="8" height="3.5" fill="#9aa8a4"/><rect x="287.6" y="62.0" width="1.9" height="1.8" fill="#8a8a8a"/><rect x="290.3" y="62.0" width="1.9" height="1.8" fill="#8a8a8a"/><rect x="293.0" y="62.0" width="1.9" height="1.8" fill="#8a8a8a"/><rect x="287.6" y="64.6" width="1.9" height="1.8" fill="#8a8a8a"/><rect x="290.3" y="64.6" width="1.9" height="1.8" fill="#8a8a8a"/><rect x="293.0" y="64.6" width="1.9" height="1.8" fill="#8a8a8a"/><rect x="287.6" y="67.2" width="1.9" height="1.8" fill="#8a8a8a"/><rect x="290.3" y="67.2" width="1.9" height="1.8" fill="#8a8a8a"/><rect x="293.0" y="67.2" width="1.9" height="1.8" fill="#8a8a8a"/><rect x="287.6" y="69.8" width="1.9" height="1.8" fill="#8a8a8a"/><rect x="290.3" y="69.8" width="1.9" height="1.8" fill="#8a8a8a"/><rect x="293.0" y="69.8" width="1.9" height="1.8" fill="#8a8a8a"/><path d="M306.5 55.5 L306.5 72.5 L323 72.5" stroke="#9a9a9a" stroke-width="0.8" fill="none"/><line x1="306.5" y1="57.0" x2="308.5" y2="57.0" stroke="#999" stroke-width="0.6"/><line x1="309.0" y1="72.5" x2="309.0" y2="70.8" stroke="#c08080" stroke-width="0.6"/><line x1="306.5" y1="59.6" x2="308.5" y2="59.6" stroke="#999" stroke-width="0.6"/><line x1="311.6" y1="72.5" x2="311.6" y2="70.8" stroke="#c08080" stroke-width="0.6"/><line x1="306.5" y1="62.2" x2="308.5" y2="62.2" stroke="#999" stroke-width="0.6"/><line x1="314.2" y1="72.5" x2="314.2" y2="70.8" stroke="#c08080" stroke-width="0.6"/><line x1="306.5" y1="64.8" x2="308.5" y2="64.8" stroke="#999" stroke-width="0.6"/><line x1="316.8" y1="72.5" x2="316.8" y2="70.8" stroke="#c08080" stroke-width="0.6"/><line x1="306.5" y1="67.4" x2="308.5" y2="67.4" stroke="#999" stroke-width="0.6"/><line x1="319.4" y1="72.5" x2="319.4" y2="70.8" stroke="#c08080" stroke-width="0.6"/><line x1="306.5" y1="70.0" x2="308.5" y2="70.0" stroke="#999" stroke-width="0.6"/><line x1="322.0" y1="72.5" x2="322.0" y2="70.8" stroke="#c08080" stroke-width="0.6"/><text x="315" y="69.8" text-anchor="middle" font-size="16.5" font-weight="bold" fill="#3e8f8c" font-family="Liberation Sans">A</text><circle cx="335.3" cy="62.5" r="5.4" fill="#fdfdfd" stroke="#9a9a9a" stroke-width="1.1"/><path d="M339.2 66.5 L345.5 72.2" stroke="#3a3a3a" stroke-width="1.8"/><path d="M332.3 62.5 L338.3 62.5 M335.3 59.5 L335.3 65.5" stroke="#3e8f8c" stroke-width="1.7"/><circle cx="358.3" cy="62.3" r="5.4" fill="#fdfdfd" stroke="#9a9a9a" stroke-width="1.1"/><path d="M362.2 66.3 L368.8 72.2" stroke="#3a3a3a" stroke-width="1.8"/><path d="M355.3 62.3 L361.3 62.3" stroke="#3e8f8c" stroke-width="1.7"/><path d="M384 55.5 L384 72.5" stroke="#4a4a4a" stroke-width="1.8"/><path d="M376 70.5 Q380.5 70 383.5 65 Q387 58 392.3 57.5" stroke="#3e8f8c" stroke-width="2" fill="none"/><ellipse cx="383.8" cy="64.3" rx="1.8" ry="2.6" fill="#3e8f8c"/><path d="M400.5 72.3 L400.5 63.5 Q404 60.5 406 62 Q408 65.5 410.5 65.3 Q414.3 65 414.4 61 L414.4 55.8" stroke="#4a4a4a" stroke-width="1.9" fill="none"/><path d="M399.2 63.5 Q402 59.5 405.5 59.3" stroke="#3e8f8c" stroke-width="2.2" fill="none"/><text x="421.4" y="64.4" font-size="9.8" font-weight="bold" fill="#4a4a4a" font-family="Liberation Sans">1</text><text x="432.2" y="72.4" font-size="9.6" font-weight="bold" fill="#4a4a4a" font-family="Liberation Sans">2</text><path d="M422 71.7 Q427.5 70.8 430.5 64 Q434 57 438.6 56.2" stroke="#3e8f8c" stroke-width="1.7" fill="none"/><path d="M460 57.3 L460 72" stroke="#4a4a4a" stroke-width="1.7"/><path d="M445 68.6 Q447.5 67.5 449.5 66 Q453 62 455.5 58.8 Q457.5 56.5 461 56.8" stroke="#3e8f8c" stroke-width="1.9" fill="none"/><path d="M447.3 69 L447.3 72.3" stroke="#4a4a4a" stroke-width="1.5"/><path d="M469.3 71.3 L484 57.3" stroke="#4a4a4a" stroke-width="1.8"/><path d="M468.3 70.8 L470.6 72.6 M482.5 56.6 L485.3 57.2" stroke="#3e8f8c" stroke-width="1.5"/><path d="M494.5 56 L499.6 66.5 M505 56 L499.6 66.5" stroke="#555" stroke-width="1.5"/><path d="M491 71.5 Q493 64.5 495.3 64.5 Q497.5 64.5 499.6 69.2 Q501.7 64.5 504 64.5 Q506.3 64.5 508.2 71.5" stroke="#3e8f8c" stroke-width="1.8" fill="none"/><path d="M514.6 55.5 L514.6 72 L531 72" stroke="#9a9a9a" stroke-width="0.8" fill="none"/><line x1="514.6" y1="57.0" x2="516.3" y2="57.0" stroke="#999" stroke-width="0.6"/><line x1="517.0" y1="72" x2="517.0" y2="70.5" stroke="#999" stroke-width="0.6"/><line x1="514.6" y1="59.7" x2="516.3" y2="59.7" stroke="#999" stroke-width="0.6"/><line x1="519.6" y1="72" x2="519.6" y2="70.5" stroke="#999" stroke-width="0.6"/><line x1="514.6" y1="62.4" x2="516.3" y2="62.4" stroke="#999" stroke-width="0.6"/><line x1="522.2" y1="72" x2="522.2" y2="70.5" stroke="#999" stroke-width="0.6"/><line x1="514.6" y1="65.1" x2="516.3" y2="65.1" stroke="#999" stroke-width="0.6"/><line x1="524.8" y1="72" x2="524.8" y2="70.5" stroke="#999" stroke-width="0.6"/><line x1="514.6" y1="67.8" x2="516.3" y2="67.8" stroke="#999" stroke-width="0.6"/><line x1="527.4" y1="72" x2="527.4" y2="70.5" stroke="#999" stroke-width="0.6"/><line x1="514.6" y1="70.5" x2="516.3" y2="70.5" stroke="#999" stroke-width="0.6"/><line x1="530.0" y1="72" x2="530.0" y2="70.5" stroke="#999" stroke-width="0.6"/><circle cx="524.6" cy="62.6" r="6" fill="#fdfdfd" stroke="#6a6a6a" stroke-width="1.6"/><path d="M524 59.6 L524 63.2 L526.4 64.6" stroke="#3e8f8c" stroke-width="1.4" fill="none"/><rect x="537.8" y="55.8" width="33.6" height="16.2" fill="#6fa9ab"/><path d="M550 59.5 L559.5 64 L550 68.5Z" fill="#dff0f0"/></g><g filter="url(#ib)"><circle cx="509.7" cy="28.8" r="5" fill="none" stroke="#8a8a8a" stroke-width="1.3"/><circle cx="509.7" cy="28.8" r="2.3" fill="#222"/><path d="M527.8 25.2 Q525.8 29 528.2 31.6 Q531 33.8 534.5 28.2" stroke="#1a1a1a" stroke-width="2" fill="none"/><circle cx="534.8" cy="27.6" r="1.7" fill="#1a1a1a"/><circle cx="550.6" cy="28.8" r="5.3" fill="#c4c4c8"/><path d="M547.5 25.5 Q549 28 548 30 M552 26 Q553.5 28.5 551.5 29.5 Q550 31 552.5 33" stroke="#eef0f4" stroke-width="1.1" fill="none"/><path d="M565 33.2 Q564 29.5 567.5 28.8 Q568.5 25 572.5 25 Q576.5 25 577 28.8 Q580 29.3 579.2 33.2Z" fill="#333"/><path d="M571 29 L571 32 M573.5 29 L573.5 32" stroke="#bbb" stroke-width="0.8"/><path d="M586.5 31 Q586 26 591 25.5 Q596.5 25 598 29 L598 32 L588 32.5Z" fill="#555"/><path d="M588.5 29.5 Q590 27.5 592 28" stroke="#ccc" stroke-width="0.9" fill="none"/><circle cx="596.8" cy="31.3" r="2.6" fill="#e02828"/><circle cx="616" cy="29.2" r="4.5" fill="none" stroke="#d8d8d8" stroke-width="1.5"/><circle cx="642" cy="29.2" r="5" fill="none" stroke="#444" stroke-width="1.2"/><path d="M642 26.5 L642 29.5 L644 31" stroke="#444" stroke-width="0.9" fill="none"/><path d="M664.5 28.8 L670.5 28.8 M667.5 25 L667.5 33" stroke="#999" stroke-width="1" /><path d="M665.5 27 L667.5 25 L669.5 27 M665.5 31 L667.5 33 L669.5 31" stroke="#999" stroke-width="1" fill="none"/><path d="M681 26.5 Q688 21 695 26.5 M683 28.8 Q688 25 693 28.8 M685.2 31 Q688 29 690.8 31" stroke="#333" stroke-width="1.3" fill="none"/><circle cx="688" cy="33" r="1.1" fill="#333"/><path d="M703.5 27.5 L706 27.5 L709 25 L709 33 L706 30.5 L703.5 30.5Z" fill="#333"/><path d="M711 26.5 Q712.5 29 711 31.5 M713 25 Q715.5 29 713 33 M715 24 Q718 29 715 34" stroke="#888" stroke-width="0.8" fill="none"/><rect x="751.5" y="25" width="14" height="8" fill="#555"/><rect x="766" y="27.5" width="1.2" height="3" fill="#777"/><path d="M753 27 L755 29 L753 31 M757 29 L760 29 M762 27 L762 31" stroke="#ddd" stroke-width="0.9" fill="none"/><circle cx="968" cy="28.5" r="3" fill="none" stroke="#444" stroke-width="1.1"/><path d="M970.2 30.8 L972.5 33.2" stroke="#444" stroke-width="1.2"/><circle cx="992.3" cy="29.2" r="5.6" fill="#1e2a70"/><circle cx="992.3" cy="29.2" r="3.6" fill="#6a60d8"/><path d="M989 29 Q992 26 995.5 29.5" stroke="#fff" stroke-width="1" fill="none"/><path d="M1008 25.5 L1020 25.5 M1008 29 L1020 29 M1008 32.5 L1020 32.5" stroke="#333" stroke-width="1.3"/><path d="M1006 25.5 L1007 25.5 M1006 29 L1007 29 M1006 32.5 L1007 32.5" stroke="#333" stroke-width="1.3"/></g></svg>
<div class="a" style="left:0;top:604px;width:1024px;height:31px;background:linear-gradient(rgba(0,0,0,0),rgba(0,0,0,0.05) 30%,rgba(0,0,0,0.16))"></div>
<div class="a" style="left:0;top:615px;width:1024px;height:3px;background:rgba(255,255,255,0.55)"></div>
<div class="a" style="left:637px;top:615px;width:7px;height:3px;background:#fff"></div>
<div class="a" style="left:0;top:615px;width:637px;height:3px;background:#1467d2"></div>
</div></body></html>
